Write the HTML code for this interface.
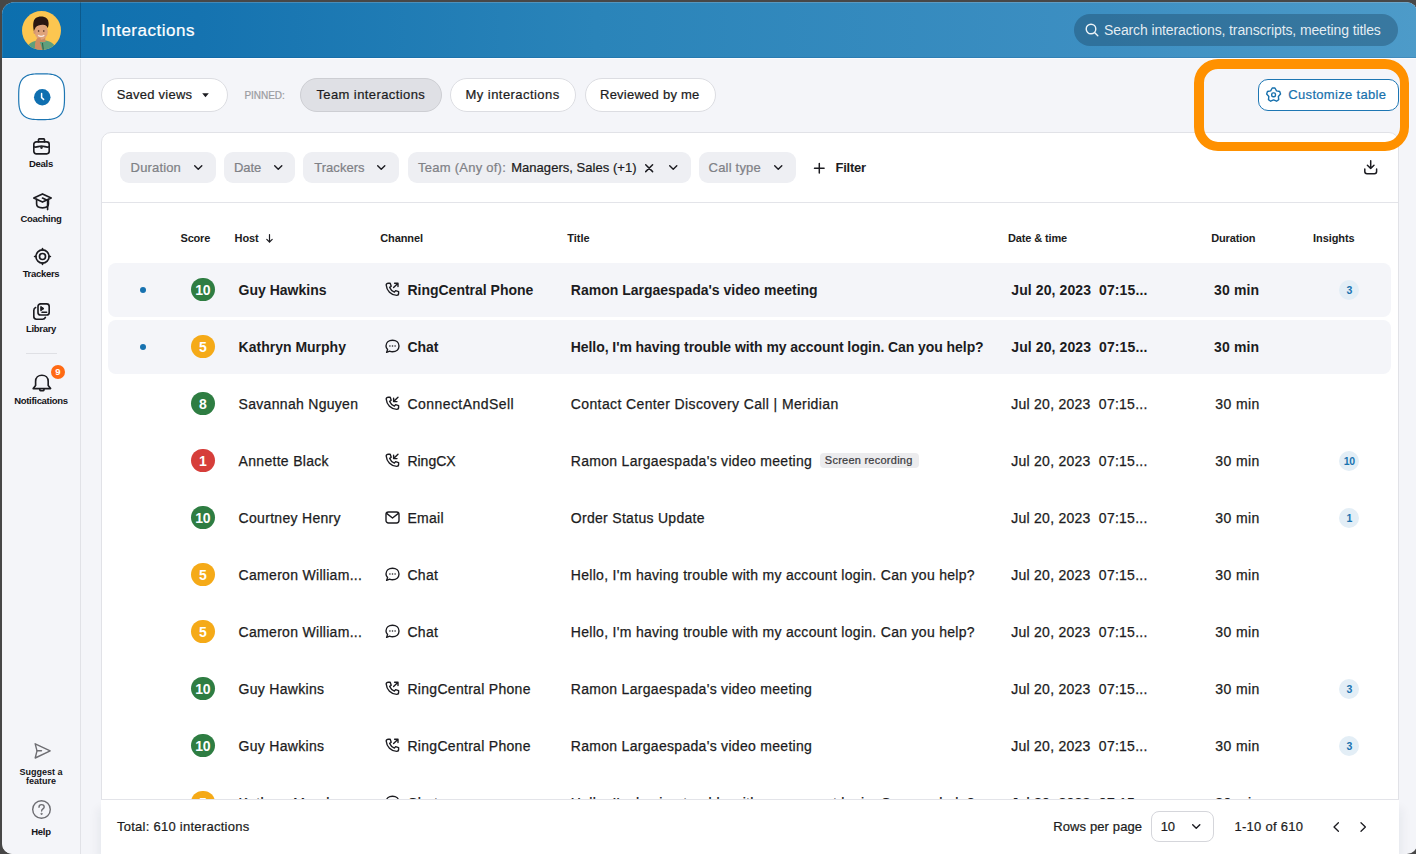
<!DOCTYPE html><html><head><meta charset="utf-8"><style>
*{box-sizing:border-box;margin:0;padding:0}
html,body{width:1416px;height:854px;overflow:hidden;background:#474747;font-family:"Liberation Sans",sans-serif;color:#1c1c21}
#win{position:absolute;left:0;top:0;width:1417.3px;height:854px;overflow:hidden;background:#f4f5f9;clip-path:inset(2.2px 0 0 2.1px round 12px 10.5px 10.5px 10.5px)}
.a{position:absolute}
.t{position:absolute;white-space:nowrap;line-height:1;-webkit-text-stroke:0.22px currentColor}
.t.nb{-webkit-text-stroke:0}
.nav{position:absolute;left:2px;width:78px;text-align:center;font-size:9.5px;font-weight:700;color:#141418;white-space:nowrap;line-height:1;letter-spacing:-0.3px}
svg{position:absolute;overflow:visible}
#hdr{left:0;top:0;width:1418px;height:58px;background:linear-gradient(90deg,#0c6fae 0%,#1573b0 14%,#2a84b9 42%,#3d8fc2 78%,#4d9bc9 100%)}
#side{left:0;top:59px;width:81px;height:800px;background:#f4f5f9;border-right:1px solid #e1e2e7}
.pill{position:absolute;top:78px;height:34px;border:1px solid #dcdde2;background:#fff;border-radius:17px}
.chip{position:absolute;top:152px;height:31px;background:#eeeff3;border-radius:9px}
.row{position:absolute;left:108px;width:1283px;height:54px;background:#f4f5f9;border-radius:8px}
.score{position:absolute;left:191px;width:23.5px;height:23.5px;border-radius:50%;color:#fff;font-weight:700;font-size:14px;text-align:center;line-height:24px;letter-spacing:-0.3px}
.g{background:#2e7d42}.o{background:#f5aa18}.r{background:#d63e3a}
.cell{position:absolute;white-space:nowrap;line-height:1;font-size:14px;color:#1c1c21;-webkit-text-stroke:0.25px #1c1c21}
.b{-webkit-text-stroke:0}
.b{font-weight:700}
.ins{position:absolute;left:1339.3px;width:20px;height:20px;border-radius:50%;background:#e3eef6;color:#1a73b0;font-size:10.5px;font-weight:700;text-align:center;line-height:20.5px;letter-spacing:-0.3px}
.hd{position:absolute;top:233.1px;white-space:nowrap;line-height:1;font-size:11px;font-weight:700;color:#1c1c21;letter-spacing:-0.12px}
</style></head><body><div id="win"><div id="hdr" class="a"></div><div class="a" style="left:80px;top:0;width:1px;height:58px;background:rgba(0,0,0,.2)"></div><div class="a" style="left:0;top:57px;width:1418px;height:1px;background:rgba(0,50,110,.14)"></div><div class="a" style="left:0;top:58px;width:1418px;height:1px;background:#fcfcfe"></div><svg style="left:22px;top:10.5px" width="39" height="39" viewBox="0 0 39 39">
<defs><clipPath id="av"><circle cx="19.5" cy="19.5" r="19.5"/></clipPath></defs>
<g clip-path="url(#av)">
<rect width="39" height="39" fill="#fcc650"/>
<path d="M3 40 C5 33 10 30.5 15 29.5 L24 29.5 C29 30.5 33 33 35.5 40 Z" fill="#5f9f7d"/>
<path d="M16 25 L23 25 L23.5 31 L16.5 31 Z" fill="#c98b62"/>
<ellipse cx="19.2" cy="20.5" rx="6.6" ry="8.2" fill="#dfa27a"/>
<ellipse cx="12.6" cy="21" rx="1.2" ry="2" fill="#d39670"/>
<path d="M11.8 20 C10.8 14 11 9.5 13.5 7.3 C15.5 5.6 19 5.4 21.5 5.8 C24.5 6.3 26.5 8.5 26.6 12 C26.7 14.5 26.2 16 25.6 17 C24.8 14.8 23 13.6 20.5 13.8 C17.5 14 15 14.6 13.6 16.6 C13 17.6 12.6 19 11.8 20 Z" fill="#2a1711"/>
<circle cx="16.6" cy="20" r="0.8" fill="#3a2218"/><circle cx="21.8" cy="20" r="0.8" fill="#3a2218"/>
<path d="M16.2 24.2 C17.5 25.6 20.5 25.8 22.3 24.2" stroke="#f6ece4" stroke-width="1.3" fill="none"/>
<path d="M13.2 39 C12.6 35 12.8 30.5 14.6 28 C15.8 26.5 17.6 26.2 18.6 27.2 C19.4 28.2 18.4 29.6 17.6 30.6 C18.6 33 19.6 36 20.2 39 Z" fill="#cf8c62"/>
<path d="M20.5 32 L21.3 39" stroke="#2f5a45" stroke-width="1"/>
</g></svg><div class="t" style="left:101px;top:22.3px;font-size:17px;color:#fff;letter-spacing:0.5px">Interactions</div><div class="a" style="left:1074px;top:14px;width:324px;height:32px;border-radius:16px;background:rgba(25,65,95,.38)"></div><svg style="left:1085px;top:23px" width="14" height="14" viewBox="0 0 14 14"><circle cx="6" cy="6" r="4.8" stroke="#eef4f8" stroke-width="1.4" fill="none"/><path d="M9.5 9.5 L12.8 12.8" stroke="#eef4f8" stroke-width="1.4" stroke-linecap="round"/></svg><div class="t nb" style="left:1104px;top:23px;font-size:14px;color:rgba(255,255,255,.88);letter-spacing:-0.12px">Search interactions, transcripts, meeting titles</div><div id="side" class="a"></div><svg style="left:18px;top:73px" width="47.2" height="47.4" viewBox="0 0 47.2 47.4"><path d="M46.50 23.70 L46.48 27.32 L46.42 29.28 L46.32 30.88 L46.19 32.28 L46.01 33.54 L45.79 34.69 L45.54 35.76 L45.24 36.75 L44.91 37.68 L44.53 38.55 L44.12 39.36 L43.66 40.13 L43.16 40.84 L42.62 41.51 L42.04 42.14 L41.41 42.72 L40.74 43.26 L40.03 43.76 L39.26 44.22 L38.45 44.63 L37.58 45.01 L36.65 45.34 L35.66 45.64 L34.59 45.89 L33.44 46.11 L32.18 46.29 L30.78 46.42 L29.18 46.52 L27.22 46.58 L23.60 46.60 L19.98 46.58 L18.02 46.52 L16.42 46.42 L15.02 46.29 L13.76 46.11 L12.61 45.89 L11.54 45.64 L10.55 45.34 L9.62 45.01 L8.75 44.63 L7.94 44.22 L7.17 43.76 L6.46 43.26 L5.79 42.72 L5.16 42.14 L4.58 41.51 L4.04 40.84 L3.54 40.13 L3.08 39.36 L2.67 38.55 L2.29 37.68 L1.96 36.75 L1.66 35.76 L1.41 34.69 L1.19 33.54 L1.01 32.28 L0.88 30.88 L0.78 29.28 L0.72 27.32 L0.70 23.70 L0.72 20.08 L0.78 18.12 L0.88 16.52 L1.01 15.12 L1.19 13.86 L1.41 12.71 L1.66 11.64 L1.96 10.65 L2.29 9.72 L2.67 8.85 L3.08 8.04 L3.54 7.27 L4.04 6.56 L4.58 5.89 L5.16 5.26 L5.79 4.68 L6.46 4.14 L7.17 3.64 L7.94 3.18 L8.75 2.77 L9.62 2.39 L10.55 2.06 L11.54 1.76 L12.61 1.51 L13.76 1.29 L15.02 1.11 L16.42 0.98 L18.02 0.88 L19.98 0.82 L23.60 0.80 L27.22 0.82 L29.18 0.88 L30.78 0.98 L32.18 1.11 L33.44 1.29 L34.59 1.51 L35.66 1.76 L36.65 2.06 L37.58 2.39 L38.45 2.77 L39.26 3.18 L40.03 3.64 L40.74 4.14 L41.41 4.68 L42.04 5.26 L42.62 5.89 L43.16 6.56 L43.66 7.27 L44.12 8.04 L44.53 8.85 L44.91 9.72 L45.24 10.65 L45.54 11.64 L45.79 12.71 L46.01 13.86 L46.19 15.12 L46.32 16.52 L46.42 18.12 L46.48 20.08 Z" fill="#fff" stroke="#1d76b3" stroke-width="1.2"/></svg><svg style="left:33.5px;top:88.5px" width="16.5" height="16.5" viewBox="0 0 16.5 16.5"><circle cx="8.25" cy="8.25" r="8.25" fill="#0f6fb0"/><path d="M7.6 4.6 L7.6 8.6 L9.6 10.4" stroke="#fff" stroke-width="1.5" fill="none" stroke-linecap="round"/></svg><svg style="left:33px;top:137.5px" width="17" height="17" viewBox="0 0 17 17" stroke="#1c1c21" stroke-width="1.65" fill="none" stroke-linecap="round" stroke-linejoin="round">
<rect x="0.8" y="3.8" width="15.4" height="12" rx="2.5"/>
<path d="M5.5 3.8 V1.6 Q5.5 0.8 6.3 0.8 H10.7 Q11.5 0.8 11.5 1.6 V3.8"/>
<path d="M0.8 8.6 C3 10.2 5.5 8 8.5 8 C11.5 8 14 10.2 16.2 8.6"/>
<circle cx="8.5" cy="9.6" r="0.5" fill="#1c1c21"/></svg><div class="nav" style="top:158.8px">Deals</div><svg style="left:32.5px;top:192.5px" width="19" height="18" viewBox="0 0 19 18" stroke="#1c1c21" stroke-width="1.65" fill="none" stroke-linecap="round" stroke-linejoin="round">
<path d="M9.5 0.9 L18.2 5 L9.5 9.1 L0.8 5 Z"/>
<path d="M3.6 6.4 V11 C3.6 13.6 6.4 14.8 9.5 14.8 C12.6 14.8 15.4 13.6 15.4 11 V6.4"/>
<path d="M9.5 5 L14.6 7.4 V16.6"/></svg><div class="nav" style="top:214px">Coaching</div><svg style="left:33.5px;top:247.5px" width="17" height="17" viewBox="0 0 17 17" stroke="#1c1c21" stroke-width="1.65" fill="none" stroke-linecap="round" stroke-linejoin="round">
<circle cx="8.5" cy="8.5" r="6.6"/><circle cx="8.5" cy="8.5" r="3"/>
<path d="M8.5 0.6 V2 M8.5 15 V16.4 M0.6 8.5 H2 M15 8.5 H16.4"/></svg><div class="nav" style="top:269px">Trackers</div><svg style="left:33px;top:302.5px" width="17" height="17" viewBox="0 0 17 17" stroke="#1c1c21" stroke-width="1.65" fill="none" stroke-linecap="round" stroke-linejoin="round">
<rect x="5" y="0.8" width="11.2" height="11.2" rx="2.6"/>
<path d="M2.6 4.6 Q0.8 5.4 0.8 7.4 V13.6 Q0.8 16.2 3.4 16.2 H9.6 Q11.6 16.2 12.4 14.4"/>
<path d="M8 3.6 L11 5.6 L8 7.6 Z" fill="#1c1c21" stroke-width="1"/>
<path d="M9 9.2 H13.6"/></svg><div class="nav" style="top:324.2px">Library</div><div class="a" style="left:26px;top:352.5px;width:31px;height:1px;background:#dfe0e5"></div><svg style="left:32px;top:374px" width="20" height="19" viewBox="0 0 20 19" stroke="#1c1c21" stroke-width="1.65" fill="none" stroke-linecap="round" stroke-linejoin="round">
<path d="M1.2 14.6 H18.6 L16.2 11.6 V7.4 C16.2 3.6 13.4 1.2 9.9 1.2 C6.4 1.2 3.6 3.6 3.6 7.4 V11.6 Z"/>
<path d="M7.8 15.4 C7.8 17.2 12 17.2 12 15.4"/></svg><div class="a" style="left:51px;top:365px;width:14px;height:14px;border-radius:50%;background:#ff6a14;color:#fff;font-size:9.5px;font-weight:700;text-align:center;line-height:14.5px">9</div><div class="nav" style="top:395.8px">Notifications</div><svg style="left:33.5px;top:743px" width="17" height="16" viewBox="0 0 17 16" stroke="#6e6e73" stroke-width="1.4" fill="none" stroke-linecap="round" stroke-linejoin="round">
<path d="M1.2 0.8 L16.2 7.8 L1.2 15 L3 7.8 Z"/><path d="M3 7.8 H7.5"/></svg><div class="nav" style="top:768.1px;line-height:8.7px;font-size:9px;letter-spacing:0">Suggest a<br>feature</div><svg style="left:32px;top:800px" width="19" height="19" viewBox="0 0 19 19" stroke="#6e6e73" stroke-width="1.4" fill="none" stroke-linecap="round" stroke-linejoin="round">
<circle cx="9.5" cy="9.5" r="8.8"/>
<path d="M7 7.2 C7 5.6 8.2 4.6 9.6 4.6 C11 4.6 12.2 5.6 12.2 7 C12.2 8.8 9.6 9 9.6 11"/>
<circle cx="9.6" cy="13.8" r="0.4" fill="#6e6e73"/></svg><div class="nav" style="top:826.8px">Help</div><div class="pill" style="left:101px;width:127px"></div><div class="t" style="left:116.7px;top:88.4px;font-size:13px;letter-spacing:0.24px">Saved views</div><svg style="left:201.5px;top:93px" width="7" height="4.5" viewBox="0 0 7 4.5"><path d="M0.2 0.2 H6.8 L3.5 4.3 Z" fill="#1c1c21"/></svg><div class="t" style="left:244.5px;top:90.5px;font-size:10px;color:#9b9ca1;letter-spacing:-0.05px">PINNED:</div><div class="pill" style="left:300px;width:141.5px;background:#dfe0e5;border-color:#cdced3"></div><div class="t" style="left:316.4px;top:88.4px;font-size:13px;letter-spacing:0.41px">Team interactions</div><div class="pill" style="left:450px;width:126px"></div><div class="t" style="left:465.6px;top:88.4px;font-size:13px;letter-spacing:0.44px">My interactions</div><div class="pill" style="left:584.5px;width:131px"></div><div class="t" style="left:600px;top:88.4px;font-size:13px;letter-spacing:0.25px">Reviewed by me</div><div class="a" style="left:1258px;top:79px;width:140.5px;height:31.5px;border:1px solid #1d76b3;border-radius:10px;background:#fff"></div><svg style="left:1266.2px;top:86.9px" width="15.2" height="15.2" viewBox="0 0 15.2 15.2" stroke="#1871ad" stroke-width="1.4" fill="none" stroke-linejoin="round">
<path d="M6.26 1.03 L8.94 1.03 L10.54 3.85 L13.72 4.51 L14.55 7.05 L12.36 9.45 L12.72 12.67 L10.56 14.24 L7.60 12.90 L4.64 14.24 L2.48 12.67 L2.84 9.45 L0.65 7.05 L1.48 4.51 L4.66 3.85 Z"/>
<rect x="5.7" y="5.9" width="3.8" height="3.8" rx="1.5"/></svg><div class="t" style="left:1288.3px;top:88.3px;font-size:13px;color:#1871ad;letter-spacing:0.32px">Customize table</div><div class="a" style="left:101px;top:132px;width:1298px;height:740px;background:#fff;border:1px solid #e1e2e7;border-radius:10px"></div><div class="a" style="left:102px;top:202px;width:1296px;height:1px;background:#e3e4e9"></div><div class="chip" style="left:120px;width:95.5px"></div><div class="t" style="left:130.6px;top:161.2px;font-size:13px;color:#7f8186;letter-spacing:0.16px">Duration</div><svg style="left:193.7px;top:165px" width="8.5" height="5" viewBox="0 0 8.5 5"><path d="M0.7 0.7 L4.25 4.3 L7.8 0.7" stroke="#1c1c21" stroke-width="1.4" fill="none" stroke-linecap="round" stroke-linejoin="round"/></svg><div class="chip" style="left:223.5px;width:71.5px"></div><div class="t" style="left:233.9px;top:161.2px;font-size:13px;color:#7f8186;letter-spacing:0px">Date</div><svg style="left:273.5px;top:165px" width="8.5" height="5" viewBox="0 0 8.5 5"><path d="M0.7 0.7 L4.25 4.3 L7.8 0.7" stroke="#1c1c21" stroke-width="1.4" fill="none" stroke-linecap="round" stroke-linejoin="round"/></svg><div class="chip" style="left:303px;width:96px"></div><div class="t" style="left:314.2px;top:161.2px;font-size:13px;color:#7f8186;letter-spacing:0.05px">Trackers</div><svg style="left:377.3px;top:165px" width="8.5" height="5" viewBox="0 0 8.5 5"><path d="M0.7 0.7 L4.25 4.3 L7.8 0.7" stroke="#1c1c21" stroke-width="1.4" fill="none" stroke-linecap="round" stroke-linejoin="round"/></svg><div class="chip" style="left:407.5px;width:283px"></div><div class="t" style="left:418px;top:161.2px;font-size:13px;color:#7f8186;letter-spacing:0.25px">Team (Any of):</div><div class="t" style="left:511.2px;top:161.2px;font-size:13px;color:#1c1c21;letter-spacing:0.04px">Managers, Sales (+1)</div><svg style="left:645.3px;top:163.5px" width="8.3" height="8.3" viewBox="0 0 8.3 8.3"><path d="M0.7 0.7 L7.6 7.6 M7.6 0.7 L0.7 7.6" stroke="#1c1c21" stroke-width="1.5" stroke-linecap="round"/></svg><svg style="left:668.6px;top:165px" width="8.5" height="5" viewBox="0 0 8.5 5"><path d="M0.7 0.7 L4.25 4.3 L7.8 0.7" stroke="#1c1c21" stroke-width="1.4" fill="none" stroke-linecap="round" stroke-linejoin="round"/></svg><div class="chip" style="left:699px;width:96.5px"></div><div class="t" style="left:708.6px;top:161.2px;font-size:13px;color:#7f8186;letter-spacing:0.2px">Call type</div><svg style="left:774px;top:165px" width="8.5" height="5" viewBox="0 0 8.5 5"><path d="M0.7 0.7 L4.25 4.3 L7.8 0.7" stroke="#1c1c21" stroke-width="1.4" fill="none" stroke-linecap="round" stroke-linejoin="round"/></svg><svg style="left:814.3px;top:162.6px" width="10.6" height="10.6" viewBox="0 0 10.6 10.6"><path d="M5.3 0.5 V10.1 M0.5 5.3 H10.1" stroke="#1c1c21" stroke-width="1.5" stroke-linecap="round"/></svg><div class="t nb" style="left:835.5px;top:161px;font-size:13px;font-weight:700;letter-spacing:-0.25px">Filter</div><svg style="left:1364.2px;top:160.3px" width="14" height="15" viewBox="0 0 14 15" stroke="#1c1c21" stroke-width="1.5" fill="none" stroke-linecap="round" stroke-linejoin="round">
<path d="M6.7 0.8 V8.4 M3.4 5.2 L6.7 8.5 L10 5.2"/><path d="M0.8 9 V11.6 Q0.8 13.8 3 13.8 H10.4 Q12.6 13.8 12.6 11.6 V9"/></svg><div class="hd" style="left:180.5px;letter-spacing:-0.2px">Score</div><div class="hd" style="left:234.6px;letter-spacing:-0.14px">Host</div><div class="hd" style="left:380.2px;letter-spacing:-0.09px">Channel</div><div class="hd" style="left:567.3px;letter-spacing:-0.04px">Title</div><div class="hd" style="left:1007.9px;letter-spacing:-0.12px">Date &amp; time</div><div class="hd" style="left:1211.2px;letter-spacing:-0.14px">Duration</div><div class="hd" style="left:1313.1px;letter-spacing:-0.1px">Insights</div><svg style="left:266.4px;top:233.5px" width="7" height="9" viewBox="0 0 7 9"><path d="M3.5 0.6 V8.2 M0.8 5.4 L3.5 8.2 L6.2 5.4" stroke="#1c1c21" stroke-width="1.2" fill="none" stroke-linecap="round" stroke-linejoin="round"/></svg><div class="row" style="top:262.7px"></div><div class="a" style="left:140px;top:286.5px;width:6px;height:6px;border-radius:50%;background:#1772b0"></div><div class="score g" style="top:277.75px">10</div><div class="cell b" style="left:238.6px;top:282.9px;letter-spacing:0px">Guy Hawkins</div><svg style="left:384.5px;top:282.0px" width="15" height="15" viewBox="0 0 15 15" stroke="#1c1c21" stroke-width="1.4" fill="none" stroke-linecap="round" stroke-linejoin="round"><path d="M3.2 1.2 L5.2 1.2 L6.2 4.2 L4.7 5.4 C5.6 7.6 7.2 9.2 9.4 10.1 L10.6 8.6 L13.6 9.6 L13.6 11.6 C13.6 12.6 12.8 13.4 11.8 13.4 C6 13 1.6 8.6 1.2 3 C1.2 2 2 1.2 3.2 1.2 Z"/><path d="M8.6 5.6 L13 1.2 M9.6 1.2 H13 V4.6"/></svg><div class="cell b" style="left:407.4px;top:282.9px;letter-spacing:0px">RingCentral Phone</div><div class="cell b" style="left:570.8px;top:282.9px;letter-spacing:0px">Ramon Largaespada&#39;s video meeting</div><div class="cell b" style="left:1011.3px;top:282.9px;letter-spacing:0.1px">Jul 20, 2023&nbsp;&nbsp;07:15...</div><div class="cell b" style="left:1214px;top:282.9px;letter-spacing:0.15px">30 min</div><div class="ins" style="top:279.5px">3</div><div class="row" style="top:319.7px"></div><div class="a" style="left:140px;top:343.5px;width:6px;height:6px;border-radius:50%;background:#1772b0"></div><div class="score o" style="top:334.75px">5</div><div class="cell b" style="left:238.6px;top:339.9px;letter-spacing:0px">Kathryn Murphy</div><svg style="left:384.5px;top:339.0px" width="15" height="15" viewBox="0 0 15 15" stroke="#1c1c21" stroke-width="1.4" fill="none" stroke-linecap="round" stroke-linejoin="round"><path d="M1.6 13.4 L2.6 10.4 C1.4 9.2 1 8 1 7 C1 3.6 3.8 1.2 7.5 1.2 C11.2 1.2 14 3.6 14 7 C14 10.4 11.2 12.8 7.5 12.8 C6.4 12.8 5.4 12.6 4.6 12.2 Z"/><circle cx="4.9" cy="7" r="0.8" fill="#1c1c21" stroke="none"/><circle cx="7.5" cy="7" r="0.8" fill="#1c1c21" stroke="none"/><circle cx="10.1" cy="7" r="0.8" fill="#1c1c21" stroke="none"/></svg><div class="cell b" style="left:407.4px;top:339.9px;letter-spacing:0px">Chat</div><div class="cell b" style="left:570.8px;top:339.9px;letter-spacing:-0.07px">Hello, I&#39;m having trouble with my account login. Can you help?</div><div class="cell b" style="left:1011.3px;top:339.9px;letter-spacing:0.1px">Jul 20, 2023&nbsp;&nbsp;07:15...</div><div class="cell b" style="left:1214px;top:339.9px;letter-spacing:0.15px">30 min</div><div class="score g" style="top:391.75px">8</div><div class="cell" style="left:238.6px;top:396.9px;letter-spacing:0.3px">Savannah Nguyen</div><svg style="left:384.5px;top:396.0px" width="15" height="15" viewBox="0 0 15 15" stroke="#1c1c21" stroke-width="1.4" fill="none" stroke-linecap="round" stroke-linejoin="round"><path d="M3.2 1.2 L5.2 1.2 L6.2 4.2 L4.7 5.4 C5.6 7.6 7.2 9.2 9.4 10.1 L10.6 8.6 L13.6 9.6 L13.6 11.6 C13.6 12.6 12.8 13.4 11.8 13.4 C6 13 1.6 8.6 1.2 3 C1.2 2 2 1.2 3.2 1.2 Z"/><path d="M13 1.2 L8.6 5.6 M8.6 2.2 V5.6 H12"/></svg><div class="cell" style="left:407.4px;top:396.9px;letter-spacing:0.45px">ConnectAndSell</div><div class="cell" style="left:570.8px;top:396.9px;letter-spacing:0.38px">Contact Center Discovery Call | Meridian</div><div class="cell" style="left:1011.3px;top:396.9px;letter-spacing:0.25px">Jul 20, 2023&nbsp;&nbsp;07:15...</div><div class="cell" style="left:1215.3px;top:396.9px;letter-spacing:0.4px">30 min</div><div class="score r" style="top:448.75px">1</div><div class="cell" style="left:238.6px;top:453.9px;letter-spacing:0.3px">Annette Black</div><svg style="left:384.5px;top:453.0px" width="15" height="15" viewBox="0 0 15 15" stroke="#1c1c21" stroke-width="1.4" fill="none" stroke-linecap="round" stroke-linejoin="round"><path d="M3.2 1.2 L5.2 1.2 L6.2 4.2 L4.7 5.4 C5.6 7.6 7.2 9.2 9.4 10.1 L10.6 8.6 L13.6 9.6 L13.6 11.6 C13.6 12.6 12.8 13.4 11.8 13.4 C6 13 1.6 8.6 1.2 3 C1.2 2 2 1.2 3.2 1.2 Z"/><path d="M13 1.2 L8.6 5.6 M8.6 2.2 V5.6 H12"/></svg><div class="cell" style="left:407.4px;top:453.9px;letter-spacing:0px">RingCX</div><div class="cell" style="left:570.8px;top:453.9px;letter-spacing:0.3px">Ramon Largaespada&#39;s video meeting</div><div class="a" style="left:820.4px;top:453.2px;width:98.5px;height:15px;border-radius:4px;background:#ececee"></div><div class="t" style="left:824.8px;top:455.3px;font-size:11px;color:#3b3b40;letter-spacing:0.25px">Screen recording</div><div class="cell" style="left:1011.3px;top:453.9px;letter-spacing:0.25px">Jul 20, 2023&nbsp;&nbsp;07:15...</div><div class="cell" style="left:1215.3px;top:453.9px;letter-spacing:0.4px">30 min</div><div class="ins" style="top:450.5px">10</div><div class="score g" style="top:505.75px">10</div><div class="cell" style="left:238.6px;top:510.9px;letter-spacing:0.3px">Courtney Henry</div><svg style="left:384.5px;top:510.0px" width="15" height="15" viewBox="0 0 15 15" stroke="#1c1c21" stroke-width="1.4" fill="none" stroke-linecap="round" stroke-linejoin="round"><rect x="1" y="2" width="13" height="11" rx="2.4"/><path d="M1.6 3.4 L7.5 8 L13.4 3.4"/></svg><div class="cell" style="left:407.4px;top:510.9px;letter-spacing:0.3px">Email</div><div class="cell" style="left:570.8px;top:510.9px;letter-spacing:0.3px">Order Status Update</div><div class="cell" style="left:1011.3px;top:510.9px;letter-spacing:0.25px">Jul 20, 2023&nbsp;&nbsp;07:15...</div><div class="cell" style="left:1215.3px;top:510.9px;letter-spacing:0.4px">30 min</div><div class="ins" style="top:507.5px">1</div><div class="score o" style="top:562.75px">5</div><div class="cell" style="left:238.6px;top:567.9px;letter-spacing:0.3px">Cameron William...</div><svg style="left:384.5px;top:567.0px" width="15" height="15" viewBox="0 0 15 15" stroke="#1c1c21" stroke-width="1.4" fill="none" stroke-linecap="round" stroke-linejoin="round"><path d="M1.6 13.4 L2.6 10.4 C1.4 9.2 1 8 1 7 C1 3.6 3.8 1.2 7.5 1.2 C11.2 1.2 14 3.6 14 7 C14 10.4 11.2 12.8 7.5 12.8 C6.4 12.8 5.4 12.6 4.6 12.2 Z"/><circle cx="4.9" cy="7" r="0.8" fill="#1c1c21" stroke="none"/><circle cx="7.5" cy="7" r="0.8" fill="#1c1c21" stroke="none"/><circle cx="10.1" cy="7" r="0.8" fill="#1c1c21" stroke="none"/></svg><div class="cell" style="left:407.4px;top:567.9px;letter-spacing:0.3px">Chat</div><div class="cell" style="left:570.8px;top:567.9px;letter-spacing:0.3px">Hello, I&#39;m having trouble with my account login. Can you help?</div><div class="cell" style="left:1011.3px;top:567.9px;letter-spacing:0.25px">Jul 20, 2023&nbsp;&nbsp;07:15...</div><div class="cell" style="left:1215.3px;top:567.9px;letter-spacing:0.4px">30 min</div><div class="score o" style="top:619.75px">5</div><div class="cell" style="left:238.6px;top:624.9px;letter-spacing:0.3px">Cameron William...</div><svg style="left:384.5px;top:624.0px" width="15" height="15" viewBox="0 0 15 15" stroke="#1c1c21" stroke-width="1.4" fill="none" stroke-linecap="round" stroke-linejoin="round"><path d="M1.6 13.4 L2.6 10.4 C1.4 9.2 1 8 1 7 C1 3.6 3.8 1.2 7.5 1.2 C11.2 1.2 14 3.6 14 7 C14 10.4 11.2 12.8 7.5 12.8 C6.4 12.8 5.4 12.6 4.6 12.2 Z"/><circle cx="4.9" cy="7" r="0.8" fill="#1c1c21" stroke="none"/><circle cx="7.5" cy="7" r="0.8" fill="#1c1c21" stroke="none"/><circle cx="10.1" cy="7" r="0.8" fill="#1c1c21" stroke="none"/></svg><div class="cell" style="left:407.4px;top:624.9px;letter-spacing:0.3px">Chat</div><div class="cell" style="left:570.8px;top:624.9px;letter-spacing:0.3px">Hello, I&#39;m having trouble with my account login. Can you help?</div><div class="cell" style="left:1011.3px;top:624.9px;letter-spacing:0.25px">Jul 20, 2023&nbsp;&nbsp;07:15...</div><div class="cell" style="left:1215.3px;top:624.9px;letter-spacing:0.4px">30 min</div><div class="score g" style="top:676.75px">10</div><div class="cell" style="left:238.6px;top:681.9px;letter-spacing:0.3px">Guy Hawkins</div><svg style="left:384.5px;top:681.0px" width="15" height="15" viewBox="0 0 15 15" stroke="#1c1c21" stroke-width="1.4" fill="none" stroke-linecap="round" stroke-linejoin="round"><path d="M3.2 1.2 L5.2 1.2 L6.2 4.2 L4.7 5.4 C5.6 7.6 7.2 9.2 9.4 10.1 L10.6 8.6 L13.6 9.6 L13.6 11.6 C13.6 12.6 12.8 13.4 11.8 13.4 C6 13 1.6 8.6 1.2 3 C1.2 2 2 1.2 3.2 1.2 Z"/><path d="M8.6 5.6 L13 1.2 M9.6 1.2 H13 V4.6"/></svg><div class="cell" style="left:407.4px;top:681.9px;letter-spacing:0.3px">RingCentral Phone</div><div class="cell" style="left:570.8px;top:681.9px;letter-spacing:0.3px">Ramon Largaespada&#39;s video meeting</div><div class="cell" style="left:1011.3px;top:681.9px;letter-spacing:0.25px">Jul 20, 2023&nbsp;&nbsp;07:15...</div><div class="cell" style="left:1215.3px;top:681.9px;letter-spacing:0.4px">30 min</div><div class="ins" style="top:678.5px">3</div><div class="score g" style="top:733.75px">10</div><div class="cell" style="left:238.6px;top:738.9px;letter-spacing:0.3px">Guy Hawkins</div><svg style="left:384.5px;top:738.0px" width="15" height="15" viewBox="0 0 15 15" stroke="#1c1c21" stroke-width="1.4" fill="none" stroke-linecap="round" stroke-linejoin="round"><path d="M3.2 1.2 L5.2 1.2 L6.2 4.2 L4.7 5.4 C5.6 7.6 7.2 9.2 9.4 10.1 L10.6 8.6 L13.6 9.6 L13.6 11.6 C13.6 12.6 12.8 13.4 11.8 13.4 C6 13 1.6 8.6 1.2 3 C1.2 2 2 1.2 3.2 1.2 Z"/><path d="M8.6 5.6 L13 1.2 M9.6 1.2 H13 V4.6"/></svg><div class="cell" style="left:407.4px;top:738.9px;letter-spacing:0.3px">RingCentral Phone</div><div class="cell" style="left:570.8px;top:738.9px;letter-spacing:0.3px">Ramon Largaespada&#39;s video meeting</div><div class="cell" style="left:1011.3px;top:738.9px;letter-spacing:0.25px">Jul 20, 2023&nbsp;&nbsp;07:15...</div><div class="cell" style="left:1215.3px;top:738.9px;letter-spacing:0.4px">30 min</div><div class="ins" style="top:735.5px">3</div><div class="score o" style="top:790.75px">5</div><div class="cell" style="left:238.6px;top:795.9px;letter-spacing:0.3px">Kathryn Murphy</div><svg style="left:384.5px;top:795.0px" width="15" height="15" viewBox="0 0 15 15" stroke="#1c1c21" stroke-width="1.4" fill="none" stroke-linecap="round" stroke-linejoin="round"><path d="M1.6 13.4 L2.6 10.4 C1.4 9.2 1 8 1 7 C1 3.6 3.8 1.2 7.5 1.2 C11.2 1.2 14 3.6 14 7 C14 10.4 11.2 12.8 7.5 12.8 C6.4 12.8 5.4 12.6 4.6 12.2 Z"/><circle cx="4.9" cy="7" r="0.8" fill="#1c1c21" stroke="none"/><circle cx="7.5" cy="7" r="0.8" fill="#1c1c21" stroke="none"/><circle cx="10.1" cy="7" r="0.8" fill="#1c1c21" stroke="none"/></svg><div class="cell" style="left:407.4px;top:795.9px;letter-spacing:0.3px">Chat</div><div class="cell" style="left:570.8px;top:795.9px;letter-spacing:0.3px">Hello, I&#39;m having trouble with my account login. Can you help?</div><div class="cell" style="left:1011.3px;top:795.9px;letter-spacing:0.25px">Jul 20, 2023&nbsp;&nbsp;07:15...</div><div class="cell" style="left:1215.3px;top:795.9px;letter-spacing:0.4px">30 min</div><div class="a" style="left:100.5px;top:799px;width:1298px;height:60px;background:#fff;box-shadow:-7px 6px 9px -3px rgba(20,30,60,.05),7px 6px 9px -3px rgba(20,30,60,.05)"></div><div class="a" style="left:101px;top:799px;width:1298px;height:1px;background:#e3e4e9"></div><div class="t" style="left:117px;top:819.8px;font-size:13px;letter-spacing:0.26px">Total: 610 interactions</div><div class="t" style="left:1053.2px;top:819.8px;font-size:13px;letter-spacing:0.12px">Rows per page</div><div class="a" style="left:1151px;top:811px;width:62.5px;height:30.5px;border:1px solid #d5d6db;border-radius:8px;background:#fff"></div><div class="t" style="left:1160.8px;top:819.8px;font-size:13px;letter-spacing:-0.4px">10</div><svg style="left:1191.8px;top:823.5px" width="8.5" height="5" viewBox="0 0 8.5 5"><path d="M0.7 0.7 L4.25 4.3 L7.8 0.7" stroke="#1c1c21" stroke-width="1.4" fill="none" stroke-linecap="round" stroke-linejoin="round"/></svg><div class="t" style="left:1234.5px;top:819.8px;font-size:13px;letter-spacing:0.27px">1-10 of 610</div><svg style="left:1332.6px;top:821.5px" width="6.5" height="10" viewBox="0 0 6.5 10"><path d="M5.4 0.7 L1 5 L5.4 9.3" stroke="#1c1c21" stroke-width="1.3" fill="none" stroke-linecap="round" stroke-linejoin="round"/></svg><svg style="left:1360px;top:821.5px" width="6.5" height="10" viewBox="0 0 6.5 10"><path d="M1 0.7 L5.4 5 L1 9.3" stroke="#1c1c21" stroke-width="1.3" fill="none" stroke-linecap="round" stroke-linejoin="round"/></svg><div class="a" style="left:1194.2px;top:59px;width:215.2px;height:91.6px;border:10px solid #ff9100;border-right-width:9px;border-bottom-width:9.6px;border-radius:24px"></div></div></body></html>
